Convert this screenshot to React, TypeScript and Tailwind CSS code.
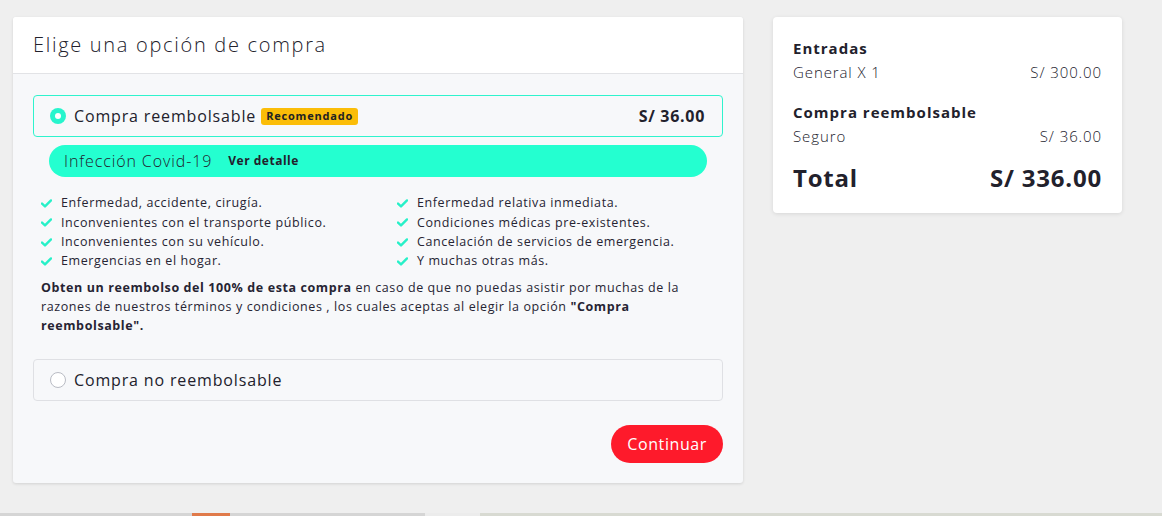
const leftItems = [
  "Enfermedad, accidente, cirugía.",
  "Inconvenientes con el transporte público.",
  "Inconvenientes con su vehículo.",
  "Emergencias en el hogar.",
];
const rightItems = [
  "Enfermedad relativa inmediata.",
  "Condiciones médicas pre-existentes.",
  "Cancelación de servicios de emergencia.",
  "Y muchas otras más.",
];

function Tick() {
  return (
    <svg width="11" height="9" viewBox="0 0 11 9" className="shrink-0">
      <path d="M1 4.6 L4 7.4 L10 1.4" fill="none" stroke="#27f0c8" strokeWidth="2.4" strokeLinecap="round" strokeLinejoin="round" />
    </svg>
  );
}

function CheckList({ items }: { items: string[] }) {
  return (
    <ul className="flex flex-col">
      {items.map((t) => (
        <li key={t} className="flex items-center gap-[9px] h-[19.3px] text-[12.5px] tracking-[0.6px] text-[#262433]">
          <Tick />
          <span>{t}</span>
        </li>
      ))}
    </ul>
  );
}

export default function App() {
  return (
    <div className="min-h-[516px] bg-[#efefef] font-['Open_Sans',sans-serif] text-[#22212c] flex flex-col">
      <div className="flex gap-[30px] pl-[13px] pt-[17px]">
        {/* purchase options */}
        <div className="w-[730px] bg-[#f7f8fa] shadow-[0_1px_3px_rgba(0,0,0,0.12)] rounded-[3px] overflow-hidden">
          <div className="h-[57px] bg-white border-b border-[#e2e3e6] px-5 flex items-center">
            <h2 className="text-[20px] font-light text-[#22212c] tracking-[1.7px]">Elige una opción de compra</h2>
          </div>
          <div className="px-5 pt-[21px] pb-5">
            <div className="h-[42px] border border-[#2ff3cd] rounded-[4px] flex items-center pl-4 pr-[17px]">
              <span className="w-[16px] h-[16px] rounded-full bg-[#27f5cd] flex items-center justify-center">
                <span className="w-[6px] h-[6px] rounded-full bg-white" />
              </span>
              <span className="ml-[8px] text-[16px] tracking-[0.85px]">Compra reembolsable</span>
              <span className="ml-[5px] bg-[#fbbd08] rounded-[3px] px-[5px] h-[17px] flex items-center text-[11px] font-bold tracking-[0.8px] text-[#222]">Recomendado</span>
              <span className="ml-auto text-[16px] font-bold tracking-[0.7px]">S/ 36.00</span>
            </div>

            <div className="mx-4 mt-[8px] h-[32px] rounded-full bg-[#24ffd0] flex items-center pl-[15px]">
              <span className="text-[16px] font-light tracking-[0.9px]">Infección Covid-19</span>
              <span className="ml-[16px] text-[12px] font-bold tracking-[0.5px]">Ver detalle</span>
            </div>

            <div className="px-2 mt-[17px] grid grid-cols-[356px_1fr]">
              <CheckList items={leftItems} />
              <CheckList items={rightItems} />
            </div>

            <p className="px-2 mt-[7px] pr-[30px] text-[12.5px] leading-[19px] tracking-[0.6px] text-[#262433]">
              <b>Obten un reembolso del 100% de esta compra</b> en caso de que no puedas asistir por muchas de la razones de nuestros términos y condiciones , los cuales aceptas al elegir la opción <b>"Compra reembolsable".</b>
            </p>

            <div className="mt-[24px] h-[42px] border border-[#dfe0e4] rounded-[4px] flex items-center pl-4">
              <span className="w-[16px] h-[16px] rounded-full border border-[#b9bcc4] bg-white" />
              <span className="ml-[8px] text-[16px] tracking-[0.85px]">Compra no reembolsable</span>
            </div>

            <div className="mt-[24px] flex justify-end">
              <button className="h-[38px] px-[16px] rounded-full bg-[#fe1a2b] text-white text-[16px] tracking-[0.6px]">Continuar</button>
            </div>
          </div>
        </div>

        {/* summary */}
        <div className="w-[349px] self-start bg-white rounded-[4px] shadow-[0_1px_4px_rgba(0,0,0,0.1)] px-5 pt-[20px] pb-[17px]">
          <div className="text-[15px] font-bold tracking-[1px]">Entradas</div>
          <div className="flex justify-between text-[15px] font-light tracking-[0.9px] mt-[1px]">
            <span>General X 1</span>
            <span>S/ 300.00</span>
          </div>
          <div className="text-[15px] font-bold tracking-[1px] mt-[18px]">Compra reembolsable</div>
          <div className="flex justify-between text-[15px] font-light tracking-[0.9px] mt-[1px]">
            <span>Seguro</span>
            <span>S/ 36.00</span>
          </div>
          <div className="flex justify-between text-[24px] leading-[36px] font-bold tracking-[0.8px] mt-[13px]">
            <span>Total</span>
            <span>S/ 336.00</span>
          </div>
        </div>
      </div>

      <div className="mt-auto h-[3px] flex">
        <div className="w-[192px] bg-[#d5d5d5]" />
        <div className="w-[38px] bg-[#e07a4a]" />
        <div className="w-[195px] bg-[#d5d5d5]" />
        <div className="w-[55px] bg-[#ececec]" />
        <div className="flex-1 bg-[#d8dad2]" />
      </div>
    </div>
  );
}
